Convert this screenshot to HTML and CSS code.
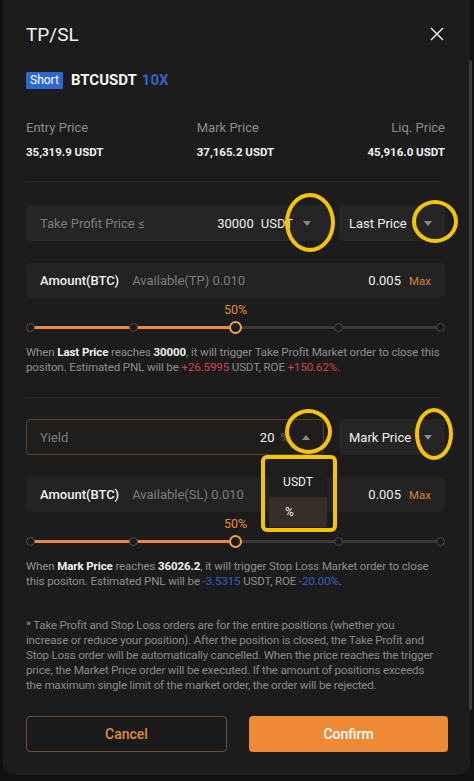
FILE: index.html
```html
<!DOCTYPE html>
<html lang="en">
<head>
  <meta charset="UTF-8">
  <meta name="viewport" content="width=device-width, initial-scale=1.0">
  <title>TP/SL</title>
  <link rel="stylesheet" href="styles.css">
</head>
<body>

<div class="sheet">

  <!-- Header -->
  <div class="head">
    <h1 class="title">TP/SL</h1>
    <svg class="close" width="14" height="14" viewBox="0 0 14 14">
      <path d="M1 1L13 13M13 1L1 13" stroke="#e6e6e6" stroke-width="1.5" fill="none"/>
    </svg>
  </div>

  <div class="symbol">
    <span class="badge">Short</span>
    <span class="pair">BTCUSDT</span>
    <span class="lev">10X</span>
  </div>

  <div class="stats">
    <div class="stat">
      <p class="stat-label">Entry Price</p>
      <p class="stat-value">35,319.9 USDT</p>
    </div>
    <div class="stat">
      <p class="stat-label">Mark Price</p>
      <p class="stat-value">37,165.2 USDT</p>
    </div>
    <div class="stat stat-right">
      <p class="stat-label">Liq. Price</p>
      <p class="stat-value">45,916.0 USDT</p>
    </div>
  </div>

  <div class="divider"></div>

  <!-- Take profit -->
  <div class="block">
    <div class="trigger-row">
      <div class="field">
        <span class="field-label">Take Profit Price ≤</span>
        <span class="field-value">30000</span>
        <span class="unit">USDT</span>
        <span class="caret"></span>
      </div>
      <div class="select">
        <span>Last Price</span>
        <span class="caret"></span>
      </div>
    </div>

    <div class="amount">
      <span class="amount-label">Amount(BTC)</span>
      <span class="avail">Available(TP) 0.010</span>
      <span class="amount-value">0.005</span>
      <span class="max">Max</span>
    </div>

    <div class="pct">50%</div>
    <div class="slider">
      <div class="track"></div>
      <div class="fill" style="width: 50%"></div>
      <span class="dot on"></span>
      <span class="dot on"></span>
      <span class="dot current"></span>
      <span class="dot"></span>
      <span class="dot"></span>
    </div>

    <p class="hint">When <b>Last Price</b> reaches <b>30000</b>, it will trigger Take Profit Market order to close this positon. Estimated PNL will be <span class="up">+26.5995</span> USDT, ROE <span class="up">+150.62%.</span></p>
  </div>

  <div class="divider"></div>

  <!-- Stop loss -->
  <div class="block block-sl">
    <div class="trigger-row">
      <div class="field field-active">
        <span class="field-label">Yield</span>
        <span class="field-value">20</span>
        <span class="unit unit-dim">%</span>
        <span class="caret caret-up"></span>
      </div>
      <div class="select">
        <span>Mark Price</span>
        <span class="caret"></span>
      </div>
    </div>

    <div class="amount">
      <span class="amount-label">Amount(BTC)</span>
      <span class="avail">Available(SL) 0.010</span>
      <span class="amount-value">0.005</span>
      <span class="max">Max</span>
    </div>

    <div class="pct">50%</div>
    <div class="slider">
      <div class="track"></div>
      <div class="fill" style="width: 50%"></div>
      <span class="dot on"></span>
      <span class="dot on"></span>
      <span class="dot current"></span>
      <span class="dot"></span>
      <span class="dot"></span>
    </div>

    <p class="hint">When <b>Mark Price</b> reaches <b>36026.2</b>, it will trigger Stop Loss Market order to close this positon. Estimated PNL will be <span class="down">-3.5315</span> USDT, ROE <span class="down">-20.00%</span>.</p>
  </div>

  <p class="note">* Take Profit and Stop Loss orders are for the entire positions (whether you<br>
    increase or reduce your position). After the position is closed, the Take Profit and<br>
    Stop Loss order will be automatically cancelled. When the price reaches the trigger<br>
    price, the Market Price order will be executed. If the amount of positions exceeds<br>
    the maximum single limit of the market order, the order will be rejected.</p>

  <div class="actions">
    <button class="btn btn-cancel">Cancel</button>
    <button class="btn btn-confirm">Confirm</button>
  </div>

  <!-- unit dropdown (open) -->
  <div class="menu">
    <div class="menu-item">USDT</div>
    <div class="menu-item menu-item-on">%</div>
  </div>

  <div class="scrollbar"></div>

  <!-- highlight marks drawn over the screenshot -->
  <span class="mark mark-1"></span>
  <span class="mark mark-2"></span>
  <span class="mark mark-3"></span>
  <span class="mark mark-4"></span>
  <span class="mark mark-box"></span>
</div>

</body>
</html>
```

FILE: styles.css
```css
body {
  margin: 0;
  background-color: #111112;
  font-family: Roboto, "Noto Sans", sans-serif;
  color: #e8e8e8;
}

p {
  margin: 0;
}

.sheet {
  position: relative;
  margin: 0 4px 0 3px;
  height: 775px;
  padding: 0 25px 0 23px;
  box-sizing: border-box;
  background-color: #1c1c1d;
  border-radius: 0 0 12px 12px;
}

/* header */
.head {
  display: flex;
  justify-content: space-between;
  align-items: center;
  padding-top: 23px;
}

.title {
  margin: 0;
  font-size: 19px;
  font-weight: 400;
  line-height: 24px;
  color: #f2f2f2;
}

.close {
  margin-right: 1px;
  margin-top: -3px;
}

.symbol {
  display: flex;
  align-items: center;
  margin-top: 24px;
  height: 18px;
}

.badge {
  background-color: #2d67d0;
  color: #fff;
  font-size: 12px;
  line-height: 17px;
  padding: 0 4px;
  border-radius: 1px;
}

.pair {
  margin-left: 8px;
  font-size: 15px;
  font-weight: 700;
  color: #f5f5f5;
}

.lev {
  margin-left: 5px;
  font-size: 15px;
  font-weight: 700;
  color: #2f64c4;
}

.stats {
  display: flex;
  justify-content: space-between;
  margin-top: 31px;
}

.stat-right {
  text-align: right;
}

.stat-label {
  font-size: 13px;
  line-height: 16px;
  color: #8c8c8c;
}

.stat-value {
  margin-top: 9px;
  font-size: 11.5px;
  font-weight: 700;
  line-height: 14px;
  color: #f0f0f0;
}

.divider {
  height: 1px;
  background-color: #272727;
}

.stats + .divider {
  margin-top: 22px;
}

/* trigger blocks */
.block {
  padding-top: 23px;
}

.block-sl {
  padding-top: 21px;
}

.trigger-row {
  display: flex;
  gap: 7px;
  height: 36px;
}

.field {
  flex: 1;
  display: flex;
  align-items: center;
  padding: 0 21px 0 14px;
  background-color: #252526;
  border-radius: 4px;
  font-size: 13px;
}

.field-active {
  margin-right: 8px;
  border: 1px solid #5c4129;
  background-color: #1f1e1d;
  padding: 0 13px 0 13px;
}

.field-label {
  flex: 1;
  color: #7d7d7d;
}

.field-value {
  color: #f0f0f0;
}

.unit {
  margin-left: 7px;
  color: #eaeaea;
}

.unit-dim {
  margin-left: 6px;
  color: #6b6b6b;
}

.caret {
  width: 0;
  height: 0;
  margin-left: 10px;
  border-left: 4px solid transparent;
  border-right: 4px solid transparent;
  border-top: 5px solid #8a8a8a;
}

.caret-up {
  margin-left: 12px;
  border-top: none;
  border-bottom: 5px solid #8a8a8a;
}

.select {
  width: 106px;
  display: flex;
  align-items: center;
  justify-content: space-between;
  padding: 0 13px 0 10px;
  box-sizing: border-box;
  background-color: #252526;
  border-radius: 4px;
  font-size: 13px;
  color: #efefef;
}

.amount {
  display: flex;
  align-items: center;
  height: 35px;
  margin-top: 22px;
  padding: 0 14px;
  background-color: #232324;
  border-radius: 4px;
  font-size: 13px;
}

.amount-label {
  color: #f2f2f2;
  font-weight: 500;
}

.avail {
  flex: 1;
  margin-left: 13px;
  color: #7d7d7d;
}

.amount-value {
  color: #efefef;
}

.max {
  margin-left: 8px;
  font-size: 11.5px;
  color: #d9822f;
}

.pct {
  margin-top: 5px;
  text-align: center;
  font-size: 12.5px;
  line-height: 14px;
  color: #e8893a;
}

/* slider */
.slider {
  position: relative;
  display: flex;
  justify-content: space-between;
  align-items: center;
  height: 12px;
  margin-top: 4px;
}

.track {
  position: absolute;
  left: 4px;
  right: 4px;
  top: 5px;
  height: 3px;
  background-color: #3a3a3b;
}

.fill {
  position: absolute;
  left: 4px;
  top: 5px;
  height: 3px;
  background-color: #ee8a3c;
}

.dot {
  position: relative;
  width: 7px;
  height: 7px;
  border: 1px solid #4a4a4a;
  border-radius: 50%;
  background-color: #1c1c1d;
}

.dot.on {
  border-color: #6a4a2c;
}

.dot.current {
  width: 9px;
  height: 9px;
  margin: 0 -2px;
  border: 2px solid #f0a054;
}

.hint {
  margin-top: 12px;
  font-size: 11.5px;
  line-height: 15px;
  letter-spacing: -0.1px;
  color: #8f8f8f;
}

.hint b {
  color: #f0f0f0;
  font-weight: 700;
}

.up {
  color: #cf4446;
}

.down {
  color: #2f63c4;
}

.block + .divider {
  margin-top: 22px;
}

.note {
  margin-top: 29px;
  font-size: 11.6px;
  line-height: 15px;
  letter-spacing: -0.2px;
  white-space: nowrap;
  color: #8a8a8a;
}

.actions {
  display: flex;
  gap: 22px;
  margin-top: 23px;
}

.btn {
  flex: 1;
  height: 36px;
  border-radius: 4px;
  font-family: Roboto, "Noto Sans", sans-serif;
  font-size: 14px;
  font-weight: 500;
}

.btn-cancel {
  border: 1px solid #6e4f33;
  background-color: #1a1a1a;
  color: #e08936;
}

.btn-confirm {
  border: none;
  margin-right: -3px;
  background-color: #ee8a36;
  color: #fff;
}

/* dropdown */
.menu {
  position: absolute;
  left: 266px;
  top: 458px;
  width: 58px;
  padding: 9px 0 0;
  background-color: #1e1e1e;
  font-size: 12px;
}

.menu-item {
  height: 30px;
  line-height: 30px;
  text-align: center;
  color: #efefef;
}

.menu-item-on {
  text-align: left;
  padding-left: 16px;
  background-color: #372e27;
}

.scrollbar {
  position: absolute;
  right: -2px;
  top: 60px;
  width: 3px;
  height: 650px;
  border-radius: 2px;
  background-color: #3a3a3b;
}

/* yellow annotation rings */
.mark {
  position: absolute;
  border: 4px solid #f6c400;
  border-radius: 50%;
  box-sizing: border-box;
}

.mark-1 {
  left: 282px;
  top: 193px;
  width: 50px;
  height: 59px;
}

.mark-2 {
  left: 409px;
  top: 200px;
  width: 46px;
  height: 43px;
}

.mark-3 {
  left: 282px;
  top: 409px;
  width: 47px;
  height: 45px;
}

.mark-4 {
  left: 412px;
  top: 408px;
  width: 38px;
  height: 52px;
}

.mark-box {
  left: 258px;
  top: 455px;
  width: 76px;
  height: 77px;
  border-radius: 6px;
}
```
